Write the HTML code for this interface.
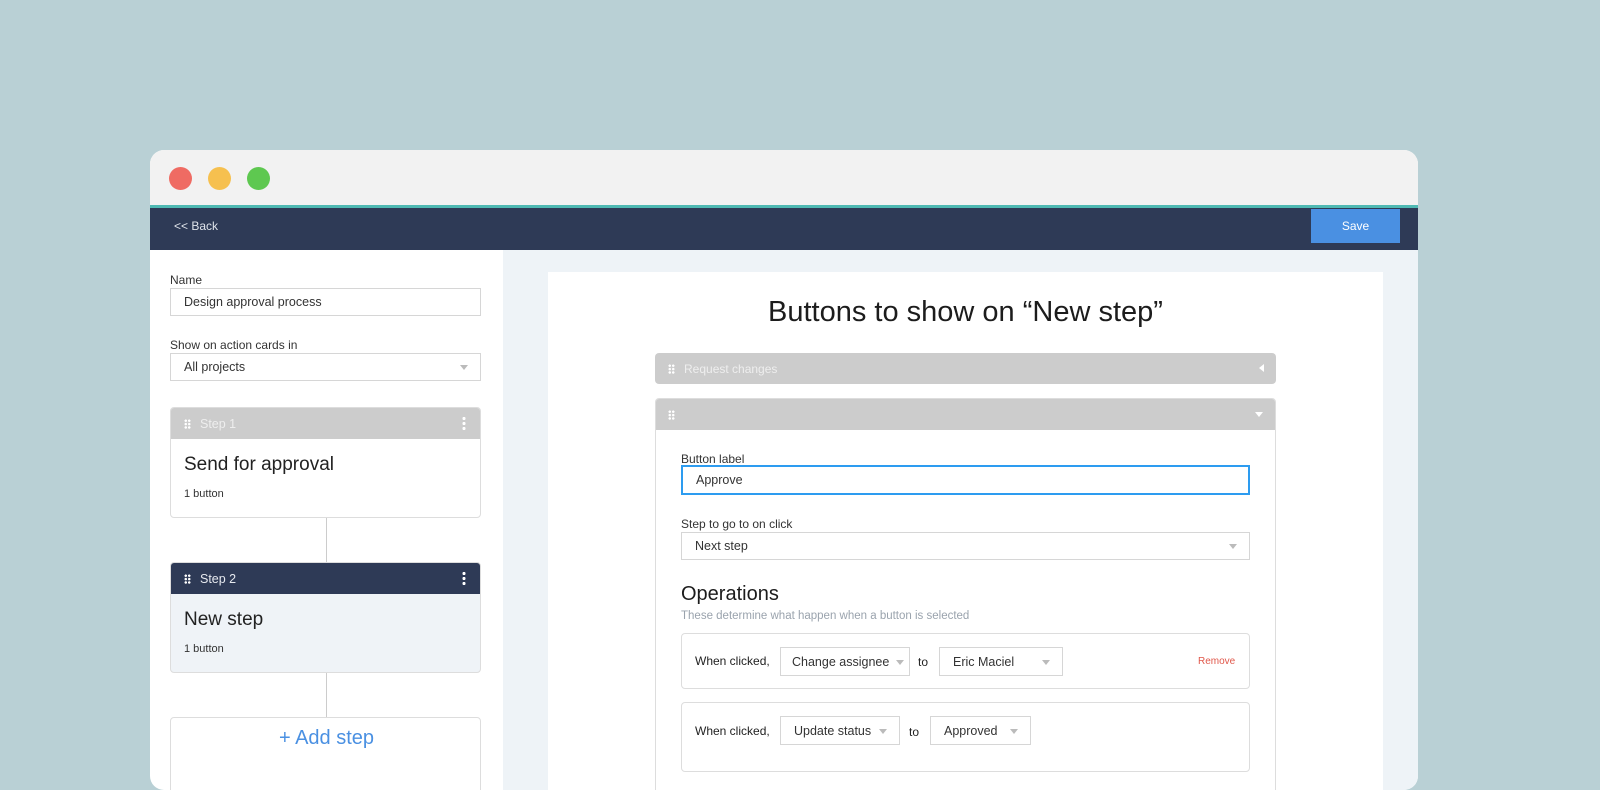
<!DOCTYPE html>
<html><head><style>
*{box-sizing:border-box;margin:0;padding:0}
body{width:1600px;height:762px;overflow:hidden;background:#b9d0d5;font-family:"Liberation Sans",sans-serif;position:relative;color:#222}
.a{position:absolute}
.win{left:150px;top:150px;width:1268px;height:640px;background:#fff;border-radius:14px;overflow:hidden}
.dot{width:23px;height:23px;border-radius:50%;top:17px}
.inp{position:absolute;border:1px solid #d6d6d6;background:#fff;font-size:12.5px;color:#333;padding-left:13px;display:flex;align-items:center}
.car{position:absolute;right:12px;top:50%;margin-top:-2px;border-left:4px solid transparent;border-right:4px solid transparent;border-top:5px solid #bbb}
.lbl{position:absolute;font-size:12px;color:#333}
.grip{display:inline-block;width:7px;height:10px;background:radial-gradient(circle,#fff 1.2px,transparent 1.3px) 0 0/3.5px 3.4px;margin-right:9px}
.kebab{position:absolute;right:14px;top:8px;width:4px;height:14px;background:radial-gradient(circle,#fff 1.6px,transparent 1.7px) 0 0/4px 5px}
.card{position:absolute;left:20px;width:311px;border:1px solid #ddd;border-radius:4px;overflow:hidden;background:#fff}
.ch{height:31px;background:#ccc;color:#eee;font-size:12.5px;display:flex;align-items:center;padding-left:13px;position:relative}
</style></head><body>
<div class="a win">
 <div class="a" style="left:0;top:0;width:1268px;height:55px;background:#f2f2f2"></div>
 <div class="a dot" style="left:19px;background:#ef6b63"></div>
 <div class="a dot" style="left:58px;background:#f6c04f"></div>
 <div class="a dot" style="left:97px;background:#5ec850"></div>
 <div class="a" style="left:0;top:55px;width:1268px;height:3px;background:#4fb9b3"></div>
 <div class="a" style="left:0;top:58px;width:1268px;height:42px;background:#2e3a56"></div>
 <div class="a" style="left:24px;top:69px;color:#dfe3ea;font-size:12px">&lt;&lt; Back</div>
 <div class="a" style="left:1161px;top:59px;width:89px;height:34px;background:#4a90e2;color:#fff;font-size:12px;display:flex;align-items:center;justify-content:center">Save</div>
 <div class="a" style="left:353px;top:100px;width:915px;height:540px;background:#eef3f7"></div>
 <div class="a" style="left:398px;top:122px;width:835px;height:520px;background:#fff"></div>
 <div class="lbl" style="left:20px;top:123px">Name</div>
 <div class="inp" style="left:20px;top:138px;width:311px;height:28px">Design approval process</div>
 <div class="lbl" style="left:20px;top:188px">Show on action cards in</div>
 <div class="inp" style="left:20px;top:203px;width:311px;height:28px">All projects<span class="car"></span></div>
 <div class="card" style="top:257px;height:111px"><div class="ch"><span class="grip"></span>Step 1<span class="kebab"></span></div>
  <div class="a" style="left:13px;top:46px;font-size:19px;color:#222">Send for approval</div>
  <div class="a" style="left:13px;top:80px;font-size:11px;color:#333">1 button</div></div>
 <div class="a" style="left:176px;top:368px;width:1px;height:44px;background:#ccc"></div>
 <div class="card" style="top:412px;height:111px;background:#eff3f7"><div class="ch" style="background:#2e3a56;color:#e6e9ef"><span class="grip"></span>Step 2<span class="kebab"></span></div>
  <div class="a" style="left:13px;top:46px;font-size:19px;color:#222">New step</div>
  <div class="a" style="left:13px;top:80px;font-size:11px;color:#333">1 button</div></div>
 <div class="a" style="left:176px;top:523px;width:1px;height:44px;background:#ccc"></div>
 <div class="card" style="top:567px;height:80px"><div class="a" style="left:0;width:311px;top:9px;text-align:center;color:#4a90e2;font-size:20px">+ Add step</div></div>
 <div class="a" style="left:398px;top:146px;width:835px;text-align:center;font-size:29px;color:#1c1c1c">Buttons to show on “New step”</div>
 <div class="a" style="left:505px;top:203px;width:621px;height:31px;background:#ccc;border-radius:4px;color:#eee;font-size:12px;display:flex;align-items:center;padding-left:13px"><span class="grip"></span>Request changes
  <span class="a" style="right:12px;top:11px;border-top:4px solid transparent;border-bottom:4px solid transparent;border-right:5px solid #fff"></span></div>
 <div class="a" style="left:505px;top:248px;width:621px;height:400px;border:1px solid #ddd;border-radius:4px;overflow:hidden">
  <div style="height:31px;background:#ccc;display:flex;align-items:center;padding-left:12px;position:relative"><span class="grip"></span>
  <span class="a" style="right:12px;top:13px;border-left:4px solid transparent;border-right:4px solid transparent;border-top:5px solid #fff"></span></div>
 </div>
 <div class="lbl" style="left:531px;top:302px">Button label</div>
 <div class="inp" style="left:531px;top:315px;width:569px;height:30px;border:2px solid #2d9cf0">Approve</div>
 <div class="lbl" style="left:531px;top:367px">Step to go to on click</div>
 <div class="inp" style="left:531px;top:382px;width:569px;height:28px">Next step<span class="car"></span></div>
 <div class="a" style="left:531px;top:433px;font-size:20px;color:#1c1c1c">Operations</div>
 <div class="a" style="left:531px;top:460px;font-size:11.5px;color:#9aa3ad">These determine what happen when a button is selected</div>
 <div class="a" style="left:531px;top:483px;width:569px;height:56px;border:1px solid #ddd;border-radius:4px"></div>
 <div class="a" style="left:545px;top:504px;font-size:12px">When clicked,</div>
 <div class="inp" style="left:630px;top:497px;width:130px;height:29px;padding-left:11px">Change assignee<span class="car" style="right:5px"></span></div>
 <div class="a" style="left:768px;top:505px;font-size:12px">to</div>
 <div class="inp" style="left:789px;top:497px;width:124px;height:29px">Eric Maciel<span class="car"></span></div>
 <div class="a" style="left:1048px;top:506px;font-size:10px;color:#e0574a">Remove</div>
 <div class="a" style="left:531px;top:552px;width:569px;height:70px;border:1px solid #ddd;border-radius:4px"></div>
 <div class="a" style="left:545px;top:574px;font-size:12px">When clicked,</div>
 <div class="inp" style="left:630px;top:566px;width:120px;height:29px">Update status<span class="car"></span></div>
 <div class="a" style="left:759px;top:575px;font-size:12px">to</div>
 <div class="inp" style="left:780px;top:566px;width:101px;height:29px">Approved<span class="car"></span></div>
</div>
</body></html>
